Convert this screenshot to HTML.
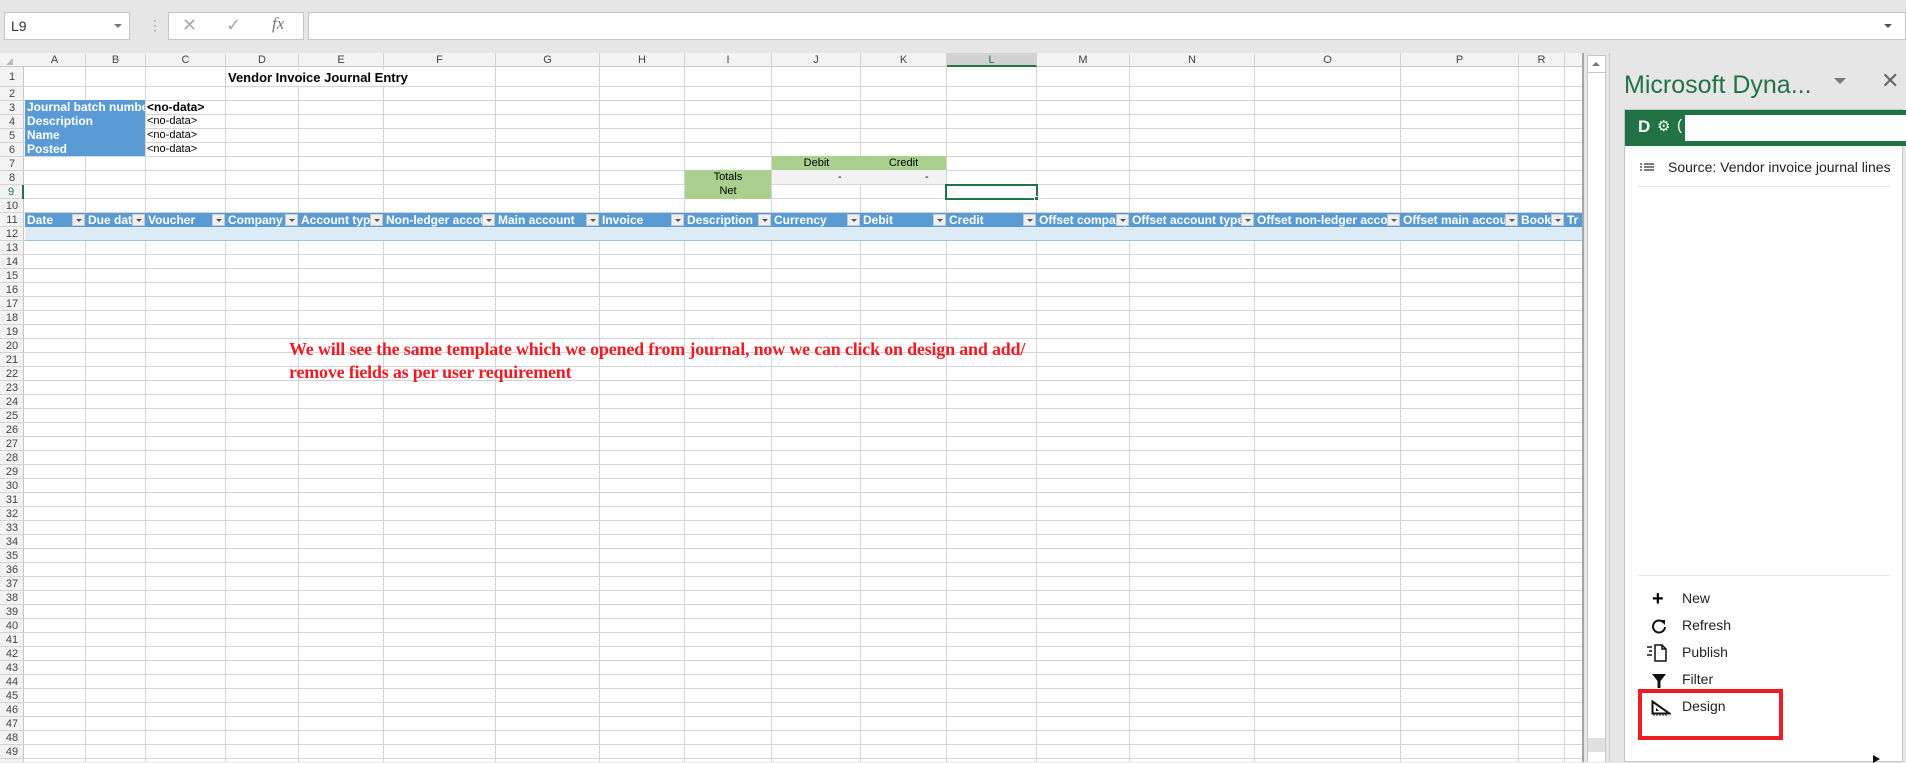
<!DOCTYPE html>
<html><head><meta charset="utf-8">
<style>
*{margin:0;padding:0;box-sizing:border-box}
body{width:1906px;height:762px;overflow:hidden;background:#e6e6e6;font-family:"Liberation Sans",sans-serif;position:relative}
.a{position:absolute}
.rn{position:absolute;left:0;width:24px;height:14px;font-size:11px;line-height:14px;text-align:center;color:#444}
.ch{position:absolute;top:53px;height:14px;font-size:11px;line-height:14px;text-align:center;color:#444;border-right:1px solid #d4d4d4}
.vl{position:absolute;top:67px;bottom:0;width:1px;background:#d4d4d4}
.hd{position:absolute;top:213px;height:14px;background:#5b9bd5;color:#fff;font-size:12px;font-weight:bold;line-height:14px;padding-left:2px;overflow:hidden;white-space:nowrap;border-right:1px solid #5b9bd5}
.dd{position:absolute;top:214px;width:13px;height:12px;background:#f0f0f0;border:1px solid #c8c8c8}
.dd:after{content:"";position:absolute;left:3px;top:4px;border-left:3px solid transparent;border-right:3px solid transparent;border-top:3px solid #555}
.lb{position:absolute;left:25px;width:120px;height:14px;background:#5b9bd5;color:#fff;font-size:12px;font-weight:bold;line-height:14px;padding-left:2px;overflow:hidden;white-space:nowrap}
.nd{position:absolute;left:147px;font-size:11px;line-height:14px;height:14px}
.mi{position:absolute;left:1682px;font-size:14px;color:#222}
</style></head><body>
<div class="a" style="left:4px;top:12px;width:126px;height:28px;background:#fff;border:1px solid #c6c6c6;font-size:14px;line-height:26px;padding-left:6px;color:#333">L9</div>
<div class="a" style="left:114px;top:24px;border-left:4px solid transparent;border-right:4px solid transparent;border-top:4px solid #777"></div>
<div class="a" style="left:148px;top:18px;color:#999;font-size:14px;line-height:14px">⋮</div>
<div class="a" style="left:168px;top:12px;width:136px;height:28px;background:#fff;border:1px solid #c6c6c6"></div>
<div class="a" style="left:182px;top:15px;color:#aaa;font-size:18px">✕</div>
<div class="a" style="left:226px;top:15px;color:#aaa;font-size:18px">✓</div>
<div class="a" style="left:272px;top:14px;color:#777;font-size:17px;font-style:italic;font-family:'Liberation Serif',serif">fx</div>
<div class="a" style="left:308px;top:12px;width:1598px;height:28px;background:#fff;border:1px solid #c6c6c6"></div>
<div class="a" style="left:1884px;top:24px;border-left:4px solid transparent;border-right:4px solid transparent;border-top:4px solid #555"></div>

<div class="a" style="left:0;top:53px;width:1583px;height:709px;background:#fff"></div>
<div class="a" style="left:0;top:53px;width:1583px;height:14px;background:#f3f3f3;border-bottom:1px solid #c6c6c6"></div>
<div class="a" style="left:0;top:67px;width:24px;height:695px;background:#f3f3f3;border-right:1px solid #c6c6c6"></div>
<div class="a" style="left:24px;top:86px;width:1559px;height:1px;background:#d4d4d4"></div>
<div class="a" style="left:24px;top:87px;width:1559px;height:675px;background:repeating-linear-gradient(to bottom,transparent 0 13px,#d4d4d4 13px 14px)"></div>
<div class="a" style="left:0;top:86px;width:24px;height:1px;background:#d4d4d4"></div>
<div class="a" style="left:0;top:87px;width:24px;height:675px;background:repeating-linear-gradient(to bottom,transparent 0 13px,#d4d4d4 13px 14px)"></div>

<div class="vl" style="left:85px"></div><div class="vl" style="left:145px"></div><div class="vl" style="left:225px"></div><div class="vl" style="left:298px"></div><div class="vl" style="left:383px"></div><div class="vl" style="left:495px"></div><div class="vl" style="left:599px"></div><div class="vl" style="left:684px"></div><div class="vl" style="left:771px"></div><div class="vl" style="left:860px"></div><div class="vl" style="left:946px"></div><div class="vl" style="left:1036px"></div><div class="vl" style="left:1129px"></div><div class="vl" style="left:1254px"></div><div class="vl" style="left:1400px"></div><div class="vl" style="left:1518px"></div><div class="vl" style="left:1564px"></div>

<div class="ch" style="left:24px;width:62px">A</div><div class="ch" style="left:86px;width:60px">B</div><div class="ch" style="left:146px;width:80px">C</div><div class="ch" style="left:226px;width:73px">D</div><div class="ch" style="left:299px;width:85px">E</div><div class="ch" style="left:384px;width:112px">F</div><div class="ch" style="left:496px;width:104px">G</div><div class="ch" style="left:600px;width:85px">H</div><div class="ch" style="left:685px;width:87px">I</div><div class="ch" style="left:772px;width:89px">J</div><div class="ch" style="left:861px;width:86px">K</div><div class="ch" style="left:947px;width:90px;background:#d2d2d2;border-bottom:2px solid #217346;color:#217346">L</div><div class="ch" style="left:1037px;width:93px">M</div><div class="ch" style="left:1130px;width:125px">N</div><div class="ch" style="left:1255px;width:146px">O</div><div class="ch" style="left:1401px;width:118px">P</div><div class="ch" style="left:1519px;width:46px">R</div>
<div class="a" style="left:6px;top:58px;border-left:7px solid transparent;border-bottom:7px solid #bbb"></div>

<div class="rn" style="top:70px">1</div>
<div class="rn" style="top:87px">2</div><div class="rn" style="top:101px">3</div><div class="rn" style="top:115px">4</div><div class="rn" style="top:129px">5</div><div class="rn" style="top:143px">6</div><div class="rn" style="top:157px">7</div><div class="rn" style="top:171px">8</div><div class="rn" style="top:185px;color:#217346;border-right:2px solid #217346">9</div><div class="rn" style="top:199px">10</div><div class="rn" style="top:213px">11</div><div class="rn" style="top:227px">12</div><div class="rn" style="top:241px">13</div><div class="rn" style="top:255px">14</div><div class="rn" style="top:269px">15</div><div class="rn" style="top:283px">16</div><div class="rn" style="top:297px">17</div><div class="rn" style="top:311px">18</div><div class="rn" style="top:325px">19</div><div class="rn" style="top:339px">20</div><div class="rn" style="top:353px">21</div><div class="rn" style="top:367px">22</div><div class="rn" style="top:381px">23</div><div class="rn" style="top:395px">24</div><div class="rn" style="top:409px">25</div><div class="rn" style="top:423px">26</div><div class="rn" style="top:437px">27</div><div class="rn" style="top:451px">28</div><div class="rn" style="top:465px">29</div><div class="rn" style="top:479px">30</div><div class="rn" style="top:493px">31</div><div class="rn" style="top:507px">32</div><div class="rn" style="top:521px">33</div><div class="rn" style="top:535px">34</div><div class="rn" style="top:549px">35</div><div class="rn" style="top:563px">36</div><div class="rn" style="top:577px">37</div><div class="rn" style="top:591px">38</div><div class="rn" style="top:605px">39</div><div class="rn" style="top:619px">40</div><div class="rn" style="top:633px">41</div><div class="rn" style="top:647px">42</div><div class="rn" style="top:661px">43</div><div class="rn" style="top:675px">44</div><div class="rn" style="top:689px">45</div><div class="rn" style="top:703px">46</div><div class="rn" style="top:717px">47</div><div class="rn" style="top:731px">48</div><div class="rn" style="top:745px">49</div>

<div class="a" style="left:228px;top:70px;font-size:13px;font-weight:bold;line-height:16px;background:#fff;padding-right:4px">Vendor Invoice Journal Entry</div>
<div class="lb" style="top:100px">Journal batch number</div>
<div class="lb" style="top:114px">Description</div>
<div class="lb" style="top:128px">Name</div>
<div class="lb" style="top:142px">Posted</div>
<div class="nd" style="top:100px;font-weight:bold;font-size:12px">&lt;no-data&gt;</div>
<div class="nd" style="top:114px">&lt;no-data&gt;</div>
<div class="nd" style="top:128px">&lt;no-data&gt;</div>
<div class="nd" style="top:142px">&lt;no-data&gt;</div>

<div class="a" style="left:772px;top:156px;width:174px;height:14px;background:#a9d08e"></div>
<div class="a" style="left:772px;top:156px;width:89px;font-size:11px;line-height:14px;text-align:center">Debit</div>
<div class="a" style="left:861px;top:156px;width:85px;font-size:11px;line-height:14px;text-align:center">Credit</div>
<div class="a" style="left:685px;top:170px;width:86px;height:29px;background:#a9d08e"></div>
<div class="a" style="left:685px;top:170px;width:86px;font-size:11px;line-height:14px;text-align:center">Totals</div>
<div class="a" style="left:685px;top:184px;width:86px;font-size:11px;line-height:14px;text-align:center">Net</div>
<div class="a" style="left:772px;top:170px;width:174px;height:14px;background:#f2f2f2"></div>
<div class="a" style="left:838px;top:170px;font-size:11px;line-height:14px">-</div>
<div class="a" style="left:925px;top:170px;font-size:11px;line-height:14px">-</div>
<div class="a" style="left:945px;top:184px;width:93px;height:16px;border:2px solid #217346"></div>
<div class="a" style="left:1034px;top:196px;width:5px;height:5px;background:#217346;border:1px solid #fff"></div>

<div class="hd" style="left:25px;width:61px">Date</div><div class="dd" style="left:72px"></div>
<div class="hd" style="left:86px;width:60px">Due date</div><div class="dd" style="left:132px"></div>
<div class="hd" style="left:146px;width:80px">Voucher</div><div class="dd" style="left:212px"></div>
<div class="hd" style="left:226px;width:73px">Company</div><div class="dd" style="left:285px"></div>
<div class="hd" style="left:299px;width:85px">Account type</div><div class="dd" style="left:370px"></div>
<div class="hd" style="left:384px;width:112px">Non-ledger account</div><div class="dd" style="left:482px"></div>
<div class="hd" style="left:496px;width:104px">Main account</div><div class="dd" style="left:586px"></div>
<div class="hd" style="left:600px;width:85px">Invoice</div><div class="dd" style="left:671px"></div>
<div class="hd" style="left:685px;width:87px">Description</div><div class="dd" style="left:758px"></div>
<div class="hd" style="left:772px;width:89px">Currency</div><div class="dd" style="left:847px"></div>
<div class="hd" style="left:861px;width:86px">Debit</div><div class="dd" style="left:933px"></div>
<div class="hd" style="left:947px;width:90px">Credit</div><div class="dd" style="left:1023px"></div>
<div class="hd" style="left:1037px;width:93px">Offset company</div><div class="dd" style="left:1116px"></div>
<div class="hd" style="left:1130px;width:125px">Offset account type</div><div class="dd" style="left:1241px"></div>
<div class="hd" style="left:1255px;width:146px">Offset non-ledger account</div><div class="dd" style="left:1387px"></div>
<div class="hd" style="left:1401px;width:118px">Offset main account</div><div class="dd" style="left:1505px"></div>
<div class="hd" style="left:1519px;width:46px">Book</div><div class="dd" style="left:1551px"></div>
<div class="hd" style="left:1565px;width:18px">Tr</div>
<div class="a" style="left:25px;top:227px;width:1558px;height:14px;background:#ddebf7;border-bottom:1px solid #9bc2e6"></div>

<div class="a" style="left:289px;top:338px;width:880px;font-family:'Liberation Serif',serif;font-weight:bold;font-size:18px;line-height:23px;color:#ee1c25;letter-spacing:-0.2px">We will see the same template which we opened from journal, now we can click on design and add/<br>remove fields as per user requirement</div>

<div class="a" style="left:1582px;top:53px;width:2px;height:709px;background:#a6a6a6"></div>
<div class="a" style="left:1587px;top:55px;width:19px;height:707px;background:#fff;border-left:1px solid #c6c6c6;border-right:1px solid #c6c6c6"></div>
<div class="a" style="left:1587px;top:55px;width:19px;height:18px;border:1px solid #c6c6c6;background:#fff"></div>
<div class="a" style="left:1592px;top:62px;border-left:4px solid transparent;border-right:4px solid transparent;border-bottom:4px solid #777"></div>
<div class="a" style="left:1588px;top:738px;width:17px;height:14px;background:#e0e0e0"></div>
<div class="a" style="left:1609px;top:53px;width:1px;height:709px;background:#c6c6c6"></div>

<div class="a" style="left:1624px;top:69px;font-size:25px;color:#217346;line-height:32px;white-space:nowrap">Microsoft Dyna...</div>
<div class="a" style="left:1834px;top:78px;border-left:6px solid transparent;border-right:6px solid transparent;border-top:6px solid #777"></div>
<div class="a" style="left:1881px;top:68px;font-size:22px;color:#666">✕</div>
<div class="a" style="left:1624px;top:109px;width:279px;height:653px;background:#fff;border:1px solid #c6c6c6"></div>
<div class="a" style="left:1625px;top:110px;width:281px;height:36px;background:#217346"></div>
<div class="a" style="left:1638px;top:117px;color:#fff;font-weight:bold;font-size:17px">D</div>
<div class="a" style="left:1657px;top:117px;color:#fff;font-size:15px">⚙</div>
<div class="a" style="left:1677px;top:117px;color:#fff;font-size:15px">(</div>
<div class="a" style="left:1685px;top:115px;width:221px;height:26px;background:#fff"></div>
<svg class="a" style="left:1640px;top:163px" width="14" height="9" viewBox="0 0 14 9"><path d="M0 1h2M0 4h2M0 7h2M4 1h10M4 4h10M4 7h10" stroke="#333" stroke-width="1.3"/></svg>
<div class="a" style="left:1668px;top:159px;font-size:14px;color:#222;white-space:nowrap;width:222px;overflow:hidden">Source: Vendor invoice journal lines</div>
<div class="a" style="left:1638px;top:186px;width:252px;height:1px;background:#e6e6e6"></div>
<div class="a" style="left:1638px;top:575px;width:252px;height:1px;background:#e6e6e6"></div>

<div class="a" style="left:1652px;top:591px;font-size:20px;font-weight:bold;line-height:16px">+</div>
<div class="mi" style="top:590px">New</div>
<svg class="a" style="left:1651px;top:618px" width="16" height="16" viewBox="0 0 16 16"><path d="M12.5 4.5A6 6 0 1 0 14 9" fill="none" stroke="#111" stroke-width="2"/><path d="M9 2h5v5z" fill="#111"/></svg>
<div class="mi" style="top:617px">Refresh</div>
<svg class="a" style="left:1646px;top:644px" width="22" height="18" viewBox="0 0 22 18"><path d="M1 3h5M3 7h3M1 11h5" stroke="#111" stroke-width="1.5"/><path d="M9 1h7l4 4v12H9z M16 1v4h4" fill="none" stroke="#111" stroke-width="1.5"/></svg>
<div class="mi" style="top:644px">Publish</div>
<svg class="a" style="left:1651px;top:673px" width="16" height="16" viewBox="0 0 16 16"><path d="M1 1h14L9.5 8v7h-3V8z" fill="#111"/></svg>
<div class="mi" style="top:671px">Filter</div>
<svg class="a" style="left:1651px;top:700px" width="20" height="16" viewBox="0 0 20 16"><path d="M1.5 1.5v12h17z" fill="none" stroke="#111" stroke-width="2"/><path d="M5 8v3h3z" fill="#111"/><path d="M3 14v2M6 14v2M9 14v2M12 14v2M15 14v2" stroke="#111"/></svg>
<div class="mi" style="top:698px">Design</div>
<div class="a" style="left:1638px;top:689px;width:145px;height:51px;border:4px solid #ee1c25"></div>
<div class="a" style="left:1873px;top:755px;border-top:4px solid transparent;border-bottom:4px solid transparent;border-left:7px solid #111"></div>
</body></html>
